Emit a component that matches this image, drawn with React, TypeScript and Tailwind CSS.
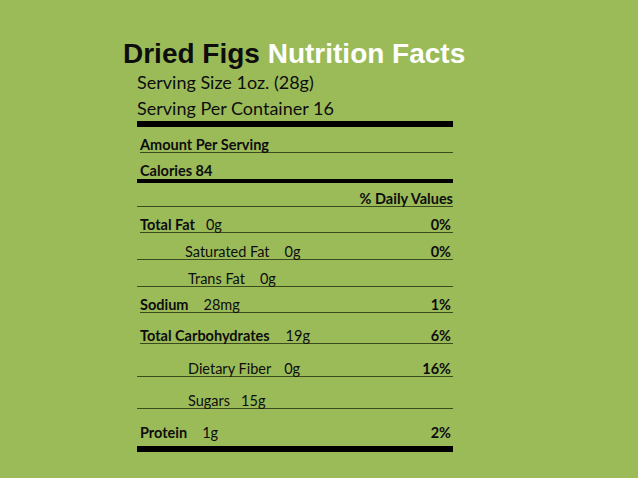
const rows = [
  { label: "Total Fat", value: "0g", pct: "0%", bold: true, indent: "", h: "h-[26px]", gap: "ml-[11px]" },
  { label: "Saturated Fat", value: "0g", pct: "0%", bold: false, indent: "pl-[48px]", h: "h-[27px]", gap: "ml-[15px]" },
  { label: "Trans Fat", value: "0g", pct: "", bold: false, indent: "pl-[51px]", h: "h-[27px]", gap: "ml-[15px]" },
  { label: "Sodium", value: "28mg", pct: "1%", bold: true, indent: "", h: "h-[26px]", gap: "ml-[15px]" },
  { label: "Total Carbohydrates", value: "19g", pct: "6%", bold: true, indent: "", h: "h-[31px]", gap: "ml-[16px]" },
  { label: "Dietary Fiber", value: "0g", pct: "16%", bold: false, indent: "pl-[51px]", h: "h-[33px]", gap: "ml-[13px]" },
  { label: "Sugars", value: "15g", pct: "", bold: false, indent: "pl-[51px]", h: "h-[32px]", gap: "ml-[11px]" },
];

export default function App() {
  return (
    <div className="w-[638px] h-[478px] bg-[#9bbb59] text-[#0d0d0d] overflow-hidden" style={{ fontFamily: "Lato, 'Open Sans', sans-serif" }}>
      <div className="pt-[38px] pl-[123px]">
        <h1 className="text-[28px] leading-[32px] font-bold" style={{ fontFamily: "'Liberation Sans', Arial, sans-serif" }}>
          Dried Figs <span className="text-white">Nutrition Facts</span>
        </h1>
      </div>

      <div className="ml-[137px] w-[316px]">
        <div className="h-[28px] flex items-end text-[18px] leading-none pb-[7px]">Serving Size 1oz. (28g)</div>
        <div className="h-[23px] flex items-end text-[18px] leading-none pb-[4px]">Serving Per Container 16</div>
        <div className="h-[6px] bg-black" />

        <div className="ml-[3px] h-[26px] flex items-end border-b border-[#3c4b1e] text-[14.5px] font-bold leading-none">
          Amount Per Serving
        </div>
        <div className="ml-[3px] h-[26px] flex items-end text-[14.5px] font-bold leading-none pb-[1px]">
          Calories 84
        </div>
        <div className="h-[4px] bg-black" />

        <div className="h-[24px] flex items-end justify-end border-b border-[#3c4b1e] text-[14.5px] font-bold leading-none">
          % Daily Values
        </div>

        {rows.map((r) => (
          <div
            key={r.label}
            className={`${r.h} flex items-end border-b border-[#3c4b1e] text-[14.5px] leading-none ${r.bold ? "ml-[3px]" : ""}`}
          >
            <span className={r.bold ? "font-bold" : r.indent}>{r.label}</span>
            <span className={r.gap}>{r.value}</span>
            <span className="ml-auto pr-[2px] font-bold">{r.pct}</span>
          </div>
        ))}

        <div className="ml-[3px] h-[37px] flex items-end text-[14.5px] leading-none pb-[6px]">
          <span className="font-bold">Protein</span>
          <span className="ml-[15px]">1g</span>
          <span className="ml-auto pr-[2px] font-bold">2%</span>
        </div>
        <div className="h-[6px] bg-black" />
      </div>
    </div>
  );
}
